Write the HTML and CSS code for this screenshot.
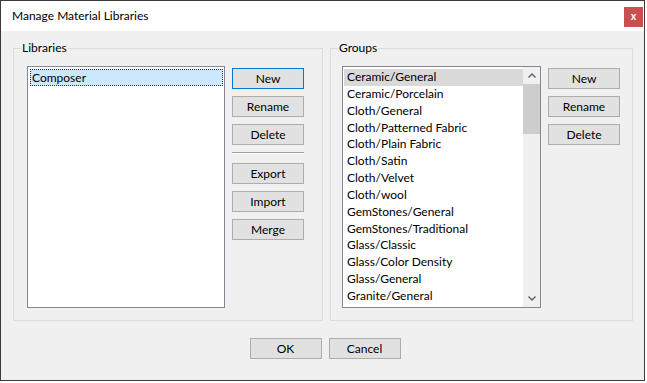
FILE: index.html
```html
<!DOCTYPE html>
<html lang="en">
<head>
    <meta charset="UTF-8">
    <title>Manage Material Libraries</title>
    <link rel="stylesheet" href="styles.css">
</head>
<body>
    <div class="dialog">
        <div class="titlebar">
            <span class="title">Manage Material Libraries</span>
            <button class="close-btn">x</button>
        </div>

        <div class="content">
            <div class="group-row">
                <fieldset class="groupbox">
                    <legend>Libraries</legend>
                    <div class="group-body libraries">
                        <div class="listbox">
                            <div class="item selected">Composer</div>
                        </div>
                        <div class="button-column">
                            <button class="btn default">New</button>
                            <button class="btn">Rename</button>
                            <button class="btn">Delete</button>
                            <hr class="separator">
                            <button class="btn">Export</button>
                            <button class="btn">Import</button>
                            <button class="btn">Merge</button>
                        </div>
                    </div>
                </fieldset>

                <fieldset class="groupbox">
                    <legend>Groups</legend>
                    <div class="group-body groups">
                        <div class="listbox scrolling">
                            <div class="items">
                                <div class="row inactive-selected">Ceramic/General</div>
                                <div class="row">Ceramic/Porcelain</div>
                                <div class="row">Cloth/General</div>
                                <div class="row">Cloth/Patterned Fabric</div>
                                <div class="row">Cloth/Plain Fabric</div>
                                <div class="row">Cloth/Satin</div>
                                <div class="row">Cloth/Velvet</div>
                                <div class="row">Cloth/wool</div>
                                <div class="row">GemStones/General</div>
                                <div class="row">GemStones/Traditional</div>
                                <div class="row">Glass/Classic</div>
                                <div class="row">Glass/Color Density</div>
                                <div class="row">Glass/General</div>
                                <div class="row">Granite/General</div>
                            </div>
                            <div class="scrollbar">
                                <div class="arrow">
                                    <svg width="8" height="5" viewBox="0 0 8 5"><polyline points="0.5,4.5 4,1 7.5,4.5" fill="none" stroke="#606060" stroke-width="1.4"/></svg>
                                </div>
                                <div class="track">
                                    <div class="thumb"></div>
                                </div>
                                <div class="arrow">
                                    <svg width="8" height="5" viewBox="0 0 8 5"><polyline points="0.5,0.5 4,4 7.5,0.5" fill="none" stroke="#606060" stroke-width="1.4"/></svg>
                                </div>
                            </div>
                        </div>
                        <div class="button-column">
                            <button class="btn">New</button>
                            <button class="btn">Rename</button>
                            <button class="btn">Delete</button>
                        </div>
                    </div>
                </fieldset>
            </div>

            <div class="dialog-buttons">
                <button class="btn">OK</button>
                <button class="btn">Cancel</button>
            </div>
        </div>
    </div>
</body>
</html>
```

FILE: styles.css
```css
body {
    margin: 0;
    background-color: #ffffff;
    font-family: 'Lato', 'Noto Sans', sans-serif;
    font-size: 12px;
    color: #000000;
}

.dialog {
    width: 645px;
    height: 381px;
    box-sizing: border-box;
    border: 1px solid #3a3a3a;
    background-color: #f0f0f0;
    display: flex;
    flex-direction: column;
}

.titlebar {
    height: 30px;
    background-color: #ffffff;
    display: flex;
    align-items: flex-start;
    justify-content: space-between;
    padding-left: 11px;
}

.title {
    line-height: 30px;
    font-size: 12px;
}

.close-btn {
    margin: 6px 1px 0 0;
    width: 19px;
    height: 20px;
    padding: 0;
    border: none;
    background-color: #c75050;
    color: #ffffff;
    font-family: 'Liberation Sans', sans-serif;
    font-size: 10px;
    font-weight: bold;
    line-height: 20px;
}

.content {
    flex: 1;
    padding: 9px 11px 0 12px;
    display: flex;
    flex-direction: column;
}

.group-row {
    display: flex;
    gap: 7px;
}

.groupbox {
    margin: 0;
    padding: 10px 0 12px;
    border: 1px solid #dcdcdc;
    min-width: 0;
}

.groupbox legend {
    margin-left: 7px;
    padding: 0 1px;
    line-height: 16px;
}

.group-body {
    display: flex;
    align-items: flex-start;
    gap: 7px;
}

.libraries {
    width: 277px;
    padding: 0 18px 0 13px;
}

.groups {
    width: 278px;
    padding: 0 12px 0 11px;
}

/* list boxes */
.listbox {
    width: 198px;
    height: 242px;
    box-sizing: border-box;
    border: 1px solid #828790;
    background-color: #ffffff;
    padding: 2px 1px 0 2px;
}

.item {
    height: 17px;
    box-sizing: border-box;
    line-height: 15px;
    padding-left: 1px;
    border: 1px dotted transparent;
}

.item.selected {
    background-color: #cce8ff;
    border-color: #333333;
}

.listbox.scrolling {
    width: 199px;
    padding: 0;
    display: flex;
}

.items {
    flex: 1;
    padding: 2px 0 0 1px;
}

.row {
    height: 16.85px;
    line-height: 16.85px;
    padding-left: 3px;
    white-space: nowrap;
}

.row.inactive-selected {
    background-color: #d9d9d9;
}

.scrollbar {
    width: 17px;
    background-color: #f0f0f0;
    display: flex;
    flex-direction: column;
}

.scrollbar .arrow {
    height: 17px;
    display: flex;
    align-items: center;
    justify-content: center;
}

.scrollbar .track {
    flex: 1;
}

.scrollbar .thumb {
    height: 50px;
    background-color: #cdcdcd;
}

/* buttons */
.button-column {
    width: 72px;
    padding-top: 2px;
    display: flex;
    flex-direction: column;
    gap: 7px;
}

.btn {
    height: 21px;
    box-sizing: border-box;
    padding: 0;
    border: 1px solid #adadad;
    background-color: #e1e1e1;
    font-family: inherit;
    font-size: 12px;
    color: #000000;
}

.btn.default {
    border-color: #0078d7;
}

.separator {
    margin: 0 0 2px;
    height: 0;
    border: none;
    border-top: 1px solid #a0a0a0;
    border-bottom: 1px solid #ffffff;
}

.dialog-buttons {
    margin-top: 17px;
    padding-left: 4px;
    display: flex;
    justify-content: center;
    gap: 7px;
}

.dialog-buttons .btn {
    width: 72px;
}
```
